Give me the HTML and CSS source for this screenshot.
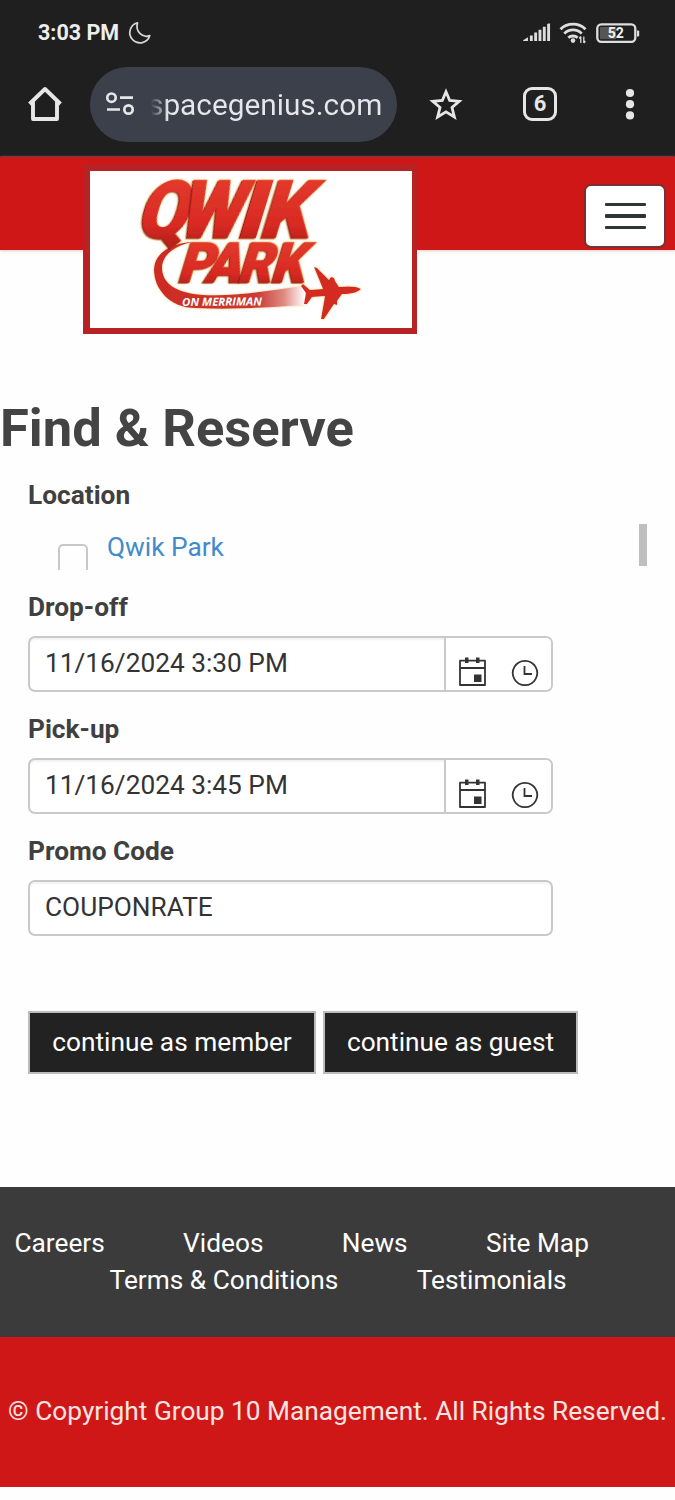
FILE: index.html
```html
<!DOCTYPE html>
<html lang="en">
<head>
<meta charset="utf-8">
<title>Find &amp; Reserve</title>
<link rel="stylesheet" href="styles.css">
</head>
<body>
<div class="chrome">
  <div class="status">
    <span class="time">3:03 PM</span>
    <svg class="moon" width="24" height="24" viewBox="0 0 24 24"><path d="M9.500 1.800A10.200 10.200 0 1 0 21.800 14.600C15 17.500 7 11 9.500 1.800Z" fill="none" stroke="#d8d8d8" stroke-width="1.700" stroke-linejoin="round"/></svg>
    <svg class="signals" width="120" height="24" viewBox="0 0 120 24" fill="#dedede">
      <path d="M1 18.500V17.500L6 14.500V18.500ZM8 12.500h3v6H8ZM12.500 9.500h3v9h-3ZM17 6.500h3v12h-3ZM21.500 3.500h3v15h-3ZM26 .5L27.500 0H29V18.500H26Z" transform="translate(-.8 2.500) scale(.96 .95)"/>
      <g fill="none" stroke="#dedede" stroke-width="2.800"><path d="M37.500 8.200a18 18 0 0 1 25 0M41.300 12.600a12 12 0 0 1 17.400 0M45.300 16.800a7 7 0 0 1 9.400 0"/></g>
      <circle cx="50" cy="19.600" r="2.300"/><path d="M57.800 15.500v6.500M60.800 15.500v6.500M56.300 17.500l1.500-2M62.300 20L60.800 22" stroke="#dedede" stroke-width="1.300"/>
      <rect x="74.300" y="3.300" width="38" height="17.500" rx="4" fill="none" stroke="#dedede" stroke-width="2.300"/><rect x="77" y="6" width="16" height="12.200" fill="#565656"/><path d="M114 9.500h1.200q1 0 1 1v4q0 1-1 1H114Z"/>
      <text x="92.800" y="17" text-anchor="middle" class="battery-text">52</text>
    </svg>
  </div>
  <div class="toolbar">
    <svg class="home" width="36" height="36" viewBox="0 0 36 36"><path d="M2.500 18L18 3L33.500 18M6 15.500V33H30V15.500" fill="none" stroke="#e6e6e6" stroke-width="3.900" stroke-linejoin="round"/></svg>
    <div class="address">
      <svg width="30" height="26" viewBox="0 0 30 26" fill="none" stroke="#e4e6ea" stroke-width="2.700"><circle cx="6.500" cy="6.700" r="4.200"/><path d="M15 6.700h13M2 18.500h13"/><circle cx="23.500" cy="18.500" r="4.200"/></svg>
      <span class="url">spacegenius.com</span>
    </div>
    <svg class="star" width="36" height="36" viewBox="0 0 36 36"><path d="M18 5.800L21.700 14.500L31.200 15.300L24 21.500L26.400 31L18 25.900L9.600 31L12 21.500L4.800 15.300L14.300 14.500Z" fill="none" stroke="#e6e6e6" stroke-width="2.800"/></svg>
    <span class="tabs">6</span>
    <svg class="more" width="10" height="32" viewBox="0 0 10 32" fill="#e6e6e6"><circle cx="5" cy="5" r="4.100"/><circle cx="5" cy="16.200" r="4.100"/><circle cx="5" cy="27.400" r="4.100"/></svg>
  </div>
</div>
<header class="site-header">
  <a class="logo">
    <svg width="322" height="157" viewBox="0 0 322 157">
      <defs>
        <linearGradient id="trail" x1="0" y1="0" x2="1" y2="0"><stop offset="0" stop-color="#ce2a24"/><stop offset=".68" stop-color="#c93a34"/><stop offset=".86" stop-color="#e08a83"/><stop offset="1" stop-color="#fff"/></linearGradient>
        <linearGradient id="face" x1="0" y1="0" x2="0" y2="1"><stop offset=".2" stop-color="#e2382b"/><stop offset=".65" stop-color="#d92a23"/><stop offset=".85" stop-color="#b8211b"/></linearGradient>
        <filter id="glow" x="-10%" y="-10%" width="120%" height="120%"><feDropShadow dx="0" dy="0" stdDeviation="1.200" flood-color="#f3bd62" flood-opacity=".9"/></filter>
        <filter id="bevel" x="-10%" y="-10%" width="120%" height="120%"><feDropShadow dx="-1.200" dy=".8" stdDeviation=".5" flood-color="#8f1612"/></filter>
      </defs>
      <g filter="url(#glow)">
        <path d="M104 71C84 71 64 81 64 99C64 118 80 137 105 137C145 139 180 136 215 134V115C180 119 145 126 113 124C88 122 72 114 72 96C73 81 90 73 104 71Z" fill="url(#trail)"/>
        <g class="logo-word">
          <text filter="url(#bevel)" transform="translate(44.500 66.500) skewX(-17)" textLength="50" lengthAdjust="spacingAndGlyphs" font-size="79">Q</text>
          <text filter="url(#bevel)" transform="translate(86 66.500) skewX(-17)" textLength="63" lengthAdjust="spacingAndGlyphs" font-size="79">W</text>
          <text filter="url(#bevel)" transform="translate(145 66.500) skewX(-17)" textLength="26" lengthAdjust="spacingAndGlyphs" font-size="79">I</text>
          <text filter="url(#bevel)" transform="translate(168 66.500) skewX(-17)" textLength="49" lengthAdjust="spacingAndGlyphs" font-size="79">K</text>
          <text filter="url(#bevel)" transform="translate(87 111) skewX(-17)" textLength="35" lengthAdjust="spacingAndGlyphs" font-size="54">P</text>
          <text filter="url(#bevel)" transform="translate(114 111) skewX(-17)" textLength="36" lengthAdjust="spacingAndGlyphs" font-size="54">A</text>
          <text filter="url(#bevel)" transform="translate(147 111) skewX(-17)" textLength="34" lengthAdjust="spacingAndGlyphs" font-size="54">R</text>
          <text filter="url(#bevel)" transform="translate(180 111) skewX(-17)" textLength="33" lengthAdjust="spacingAndGlyphs" font-size="54">K</text>
        </g>
        <path d="M271 118C267 115 258 115 249 116L245 110L244 107L241 106L239 109L227 97L224 96L233 118L220 119L213 113L211 115L216 122L214 133L217 133L222 126L235 125L231 148L234 148L244 133L247 134L247 130L252 123C262 123 268 121 271 118Z" fill="#d32b23"/>
      </g>
      <text x="92" y="135" textLength="80" lengthAdjust="spacingAndGlyphs" class="logo-tag" transform="rotate(-.5 92 135)">ON MERRIMAN</text>
    </svg>
  </a>
  <button class="menu" aria-label="Menu"><i></i><i></i><i></i></button>
</header>
<main>
  <h1>Find &amp; Reserve</h1>
  <form class="form">
    <label>Location</label>
    <div class="locations"><span class="check"></span><a>Qwik Park</a><span class="thumb"></span></div>
    <label>Drop-off</label>
    <div class="field"><span class="value">11/16/2024 3:30 PM</span><span class="pickers">
      <svg width="27" height="29" viewBox="0 0 27 29"><path d="M1 3.700H26V28H1ZM1 11H26" fill="none" stroke="#333" stroke-width="1.800" stroke-linejoin="round"/><path d="M6 .5H9.500V6H6ZM17 .5H20.500V6H17ZM15 17.500H22.500V25H15Z" fill="#333"/></svg>
      <svg width="28" height="28" viewBox="0 0 28 28"><path d="M14 1.800A12.200 12.200 0 1 1 13.990 1.800ZM13.500 7V15H21" fill="none" stroke="#333" stroke-width="1.800"/></svg>
    </span></div>
    <label>Pick-up</label>
    <div class="field"><span class="value">11/16/2024 3:45 PM</span><span class="pickers">
      <svg width="27" height="29" viewBox="0 0 27 29"><path d="M1 3.700H26V28H1ZM1 11H26" fill="none" stroke="#333" stroke-width="1.800" stroke-linejoin="round"/><path d="M6 .5H9.500V6H6ZM17 .5H20.500V6H17ZM15 17.500H22.500V25H15Z" fill="#333"/></svg>
      <svg width="28" height="28" viewBox="0 0 28 28"><path d="M14 1.800A12.200 12.200 0 1 1 13.990 1.800ZM13.500 7V15H21" fill="none" stroke="#333" stroke-width="1.800"/></svg>
    </span></div>
    <label>Promo Code</label>
    <div class="field promo"><span class="value">COUPONRATE</span></div>
    <div class="actions"><button type="button" class="btn member">continue as member</button><button type="button" class="btn guest">continue as guest</button></div>
  </form>
</main>
<footer>
  <nav class="links">
    <div class="row first"><a>Careers</a><a>Videos</a><a>News</a><a>Site Map</a></div>
    <div class="row second"><a>Terms &amp; Conditions</a><a>Testimonials</a></div>
  </nav>
  <p class="copyright">© Copyright Group 10 Management. All Rights Reserved.</p>
</footer>
</body>
</html>
```
FILE: styles.css
```css
* { box-sizing: border-box; }
body { margin: 0; width: 675px; height: 1500px; overflow: hidden; background: #fefefe; color: #333; font: 26.25px/38px Roboto, sans-serif; }
svg { display: block; flex: none; overflow: visible; }

.chrome { height: 157px; background: #1f1f1f; border-bottom: 1px solid #54221f; }
.status { display: flex; align-items: center; height: 66px; padding-left: 38px; color: #eee; }
.time { width: 81px; font-size: 21.5px; font-weight: 700; white-space: nowrap; }
.moon { margin-left: 9px; }
.signals { margin-left: 371px; }
.battery-text { font: 700 14px Roboto, sans-serif; fill: #f4f4f4; }
.toolbar { display: flex; align-items: center; height: 76px; }
.home { margin-left: 27px; }
.address { display: flex; align-items: center; width: 307px; height: 75px; margin-left: 27px; padding-left: 15px; border-radius: 38px; background: #3c404b; }
.url { width: 240px; margin: 2px 0 0 13px; font-size: 29.8px; white-space: nowrap; color: transparent; background: linear-gradient(90deg, #3c404b 3px, #e5e7ec 20px); -webkit-background-clip: text; background-clip: text; }
.star { margin-left: 31px; }
.tabs { width: 34px; height: 34px; margin-left: 59px; border: 3.500px solid #e6e6e6; border-radius: 9px; color: #e6e6e6; font-size: 22px; font-weight: 700; line-height: 28px; text-align: center; }
.more { margin-left: 68px; }

.site-header { display: flex; justify-content: space-between; align-items: flex-start; height: 93px; padding: 7px 9px 0 83px; background: #d01718; box-shadow: 0 1px 3px #e8cccc; }
.logo { width: 334px; height: 170px; border: 7px solid #b92225; border-width: 7px 5.500px 6px 7px; background: #fff; }
.logo-word { font-family: Roboto, sans-serif; font-weight: 900; fill: url(#face); stroke: url(#face); stroke-width: 1.3px; }
.logo-tag { font: italic 700 11px "Open Sans", sans-serif; fill: #fff; }
.menu { display: flex; flex-direction: column; align-items: center; justify-content: center; gap: 8px; width: 82px; height: 64px; margin-top: 20px; padding: 0; border: 2px solid #743232; border-radius: 7px; background: #fff; }
.menu i { width: 41px; height: 3.300px; border-radius: 1px; background: #303638; }

main { height: 937px; padding-top: 149px; }
h1 { margin: 0; color: #444; font-size: 52.5px; font-weight: 700; line-height: 58px; }
.form { padding: 19px 28px 0; }
.form label { display: block; height: 38px; color: #404040; font-weight: 700; }
.locations { display: flex; height: 46px; margin: 10px 0 18px; padding-left: 30px; overflow: hidden; color: #428bca; }
.check { width: 30px; height: 40px; margin: 20px 19px 0 0; border: 2px solid #c8c8c8; border-radius: 5px; }
.locations a { line-height: 46px; }
.thumb { width: 8px; height: 42px; margin-left: auto; background: #bfbfbf; }
.field { display: flex; width: 525px; height: 56px; margin: 10px 0 18px; border: 2px solid #c9c9c9; border-radius: 7px; background: #fff; box-shadow: inset 0 2px 2px #f2f2f2; }
.value { flex: 1; padding-left: 15px; line-height: 51px; }
.pickers { display: flex; gap: 25px; width: 107px; padding: 19px 0 0 13px; border-left: 2px solid #c9c9c9; background: #fff; border-radius: 0 5px 5px 0; }
.pickers svg + svg { margin-top: 2px; }
.actions { display: flex; gap: 7px; margin-top: 75px; }
.btn { height: 63px; padding: 0 0 2px; border: 2px solid #bcbcbc; background: #222; color: #fff; font: 26.25px Roboto, sans-serif; white-space: nowrap; }
.member { width: 288px; }
.guest { width: 255px; }

.links { height: 150px; padding-top: 37px; background: #3b3b3b; color: #fff; }
.row { display: flex; gap: 78.300px; height: 37px; white-space: nowrap; }
.first { padding-left: 14.500px; }
.second { padding-left: 109.500px; }
.copyright { height: 150px; margin: 0; background: #d01718; color: #fbe5e2; text-align: center; line-height: 149px; white-space: nowrap; }
```
